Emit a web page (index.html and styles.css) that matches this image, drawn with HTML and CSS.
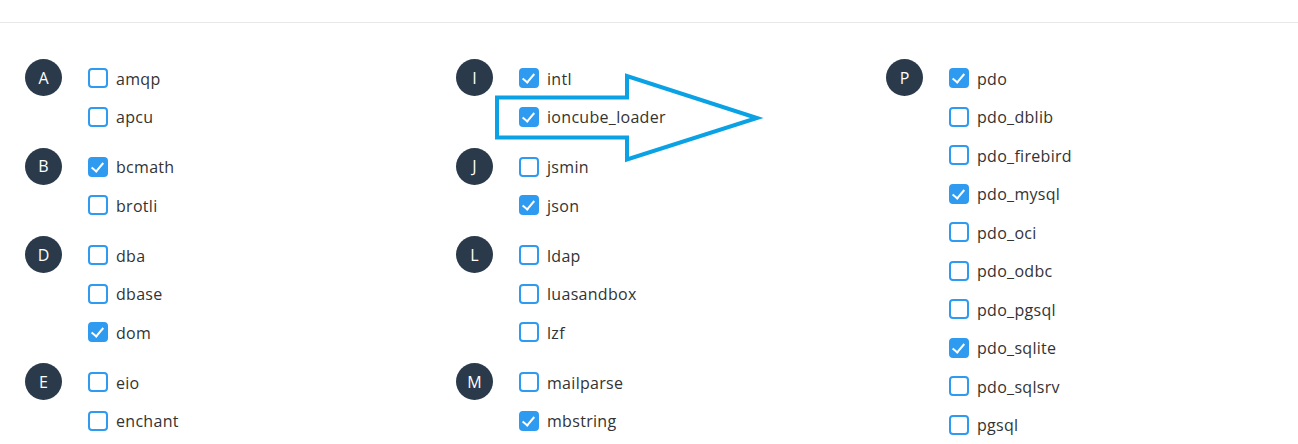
FILE: index.html
```html
<!DOCTYPE html>
<html lang="en">
<head>
    <meta charset="UTF-8">
    <meta name="viewport" content="width=device-width, initial-scale=1.0">
    <title>PHP Extensions</title>
    <link rel="stylesheet" href="styles.css">
</head>
<body>
    <div class="topbar"></div>

    <div class="columns">
        <div class="column">
            <div class="group">
                <div class="letter">A</div>
                <ul class="items">
                    <li><span class="box"></span>amqp</li>
                    <li><span class="box"></span>apcu</li>
                </ul>
            </div>
            <div class="group">
                <div class="letter">B</div>
                <ul class="items">
                    <li><span class="box checked"></span>bcmath</li>
                    <li><span class="box"></span>brotli</li>
                </ul>
            </div>
            <div class="group">
                <div class="letter">D</div>
                <ul class="items">
                    <li><span class="box"></span>dba</li>
                    <li><span class="box"></span>dbase</li>
                    <li><span class="box checked"></span>dom</li>
                </ul>
            </div>
            <div class="group">
                <div class="letter">E</div>
                <ul class="items">
                    <li><span class="box"></span>eio</li>
                    <li><span class="box"></span>enchant</li>
                </ul>
            </div>
        </div>

        <div class="column">
            <div class="group">
                <div class="letter">I</div>
                <ul class="items">
                    <li><span class="box checked"></span>intl</li>
                    <li><span class="box checked"></span>ioncube_loader</li>
                </ul>
            </div>
            <div class="group">
                <div class="letter">J</div>
                <ul class="items">
                    <li><span class="box"></span>jsmin</li>
                    <li><span class="box checked"></span>json</li>
                </ul>
            </div>
            <div class="group">
                <div class="letter">L</div>
                <ul class="items">
                    <li><span class="box"></span>ldap</li>
                    <li><span class="box"></span>luasandbox</li>
                    <li><span class="box"></span>lzf</li>
                </ul>
            </div>
            <div class="group">
                <div class="letter">M</div>
                <ul class="items">
                    <li><span class="box"></span>mailparse</li>
                    <li><span class="box checked"></span>mbstring</li>
                </ul>
            </div>
        </div>

        <div class="column">
            <div class="group">
                <div class="letter">P</div>
                <ul class="items">
                    <li><span class="box checked"></span>pdo</li>
                    <li><span class="box"></span>pdo_dblib</li>
                    <li><span class="box"></span>pdo_firebird</li>
                    <li><span class="box checked"></span>pdo_mysql</li>
                    <li><span class="box"></span>pdo_oci</li>
                    <li><span class="box"></span>pdo_odbc</li>
                    <li><span class="box"></span>pdo_pgsql</li>
                    <li><span class="box checked"></span>pdo_sqlite</li>
                    <li><span class="box"></span>pdo_sqlsrv</li>
                    <li><span class="box"></span>pgsql</li>
                </ul>
            </div>
        </div>
    </div>

    <!-- callout arrow pointing at ioncube_loader -->
    <svg class="arrow" width="1298" height="444" viewBox="0 0 1298 444">
        <polygon points="497,97.5 627,97.5 627,76 757,118 627,159.5 627,137.5 497,137.5"
                 fill="none" stroke="#0aa2e4" stroke-width="4" stroke-linejoin="miter"/>
    </svg>
</body>
</html>
```

FILE: styles.css
```css
* {
    box-sizing: border-box;
}

body {
    margin: 0;
    font-family: 'Open Sans', 'Noto Sans', sans-serif;
    font-size: 16px;
    color: #333;
    background: #fff;
    position: relative;
    height: 444px;
    overflow: hidden;
}

.topbar {
    height: 23px;
    border-bottom: 1px solid #e8e8e8;
}

.columns {
    display: grid;
    grid-template-columns: 431px 430px 430px;
    padding: 36px 0 0 25px;
}

.group {
    display: flex;
    align-items: flex-start;
    margin-bottom: 11.5px;
}

.letter {
    width: 37px;
    height: 37px;
    border-radius: 50%;
    background: #2b3a4b;
    color: #fff;
    display: flex;
    align-items: center;
    justify-content: center;
    font-size: 16px;
    flex-shrink: 0;
}

.items {
    list-style: none;
    margin: 0 0 0 26px;
    padding: 0;
}

.items li {
    height: 38.5px;
    display: flex;
    align-items: center;
    gap: 8px;
    padding-top: 1px;
    letter-spacing: 0.3px;
    white-space: nowrap;
}

.box {
    width: 20px;
    height: 20px;
    margin-top: -1px;
    border: 2px solid #2e9bf0;
    border-radius: 4px;
    background: #fff;
    position: relative;
    flex-shrink: 0;
}

.box.checked {
    background: #2e9bf0;
}

.box.checked::after {
    content: '';
    position: absolute;
    left: 4px;
    top: 1px;
    width: 5px;
    height: 10px;
    border: solid #fff;
    border-width: 0 2px 2px 0;
    transform: rotate(40deg);
}

.arrow {
    position: absolute;
    left: 0;
    top: 0;
    pointer-events: none;
}
```
